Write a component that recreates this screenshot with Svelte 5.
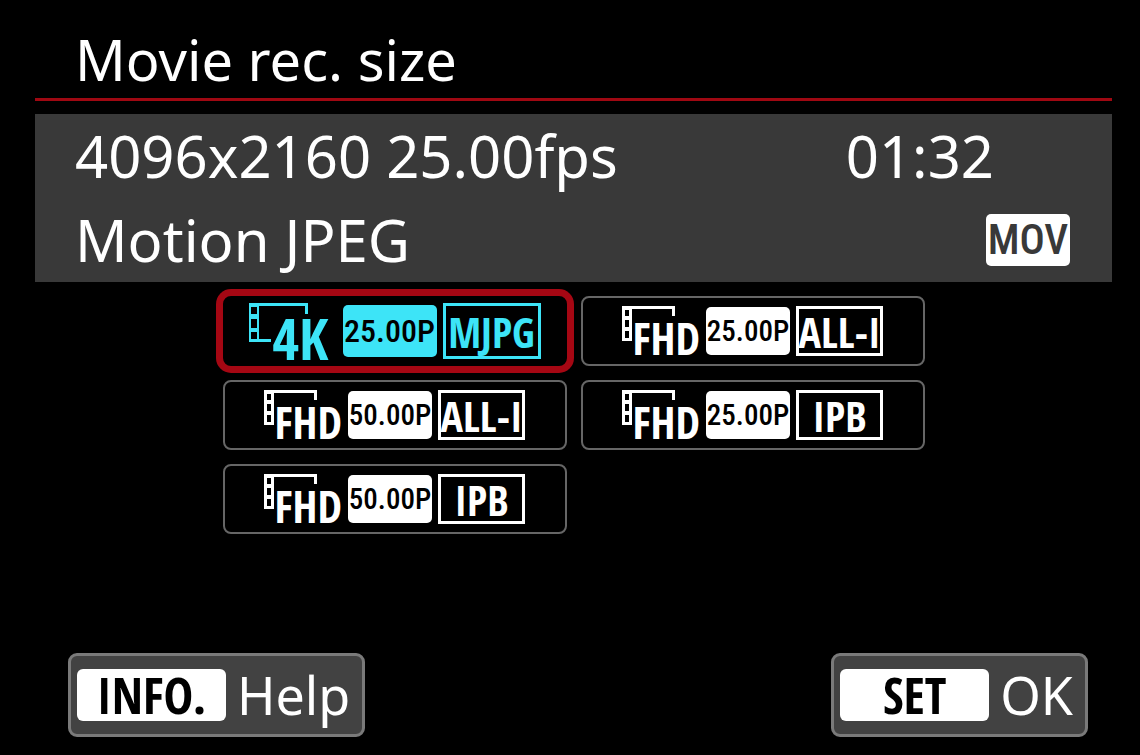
<script lang="ts">
	interface RecSize {
		size: '4K' | 'FHD';
		fps: string;
		codec: string;
		resolution: string;
		format: string;
		time: string;
	}

	const SIZES: RecSize[] = [
		{ size: '4K', fps: '25.00P', codec: 'MJPG', resolution: '4096x2160 25.00fps', format: 'Motion JPEG', time: '01:32' },
		{ size: 'FHD', fps: '25.00P', codec: 'ALL-I', resolution: '4096x2160 25.00fps', format: 'Motion JPEG', time: '01:32' },
		{ size: 'FHD', fps: '50.00P', codec: 'ALL-I', resolution: '4096x2160 25.00fps', format: 'Motion JPEG', time: '01:32' },
		{ size: 'FHD', fps: '25.00P', codec: 'IPB', resolution: '4096x2160 25.00fps', format: 'Motion JPEG', time: '01:32' },
		{ size: 'FHD', fps: '50.00P', codec: 'IPB', resolution: '4096x2160 25.00fps', format: 'Motion JPEG', time: '01:32' }
	];

	let selected = $state(0);
	let current = $derived(SIZES[selected]);
</script>

<main class="screen">
	<h1 class="title">Movie rec. size</h1>

	<section class="info">
		<div class="info-row">
			<span>{current.resolution}</span>
			<span class="time">{current.time}</span>
		</div>
		<div class="info-row">
			<span>{current.format}</span>
			<span class="container-tag">MOV</span>
		</div>
	</section>

	<div class="options">
		{#each SIZES as option, i (i)}
			<button
				type="button"
				class="option"
				class:selected={i === selected}
				aria-pressed={i === selected}
				onclick={() => (selected = i)}
			>
				<span class="film" class:uhd={option.size === '4K'}>
					{#if option.size === '4K'}
						<svg width="80" height="56" viewBox="0 0 80 56" aria-hidden="true">
							<path
								fill-rule="evenodd"
								d="M0 0H59V11H56V3H10V36H22V39H0ZM2 4V11H8V4ZM2 16V25H8V16ZM2 29V36H8V29Z"
							/>
						</svg>
					{:else}
						<svg width="78" height="50" viewBox="0 0 78 50" aria-hidden="true">
							<path
								fill-rule="evenodd"
								d="M0 0H53V10H50V3H10V35H0ZM3 4V10H7V4ZM3 14V21H7V14ZM3 25V32H7V25Z"
							/>
						</svg>
					{/if}
					<span class="film-label">{option.size}</span>
				</span>
				<span class="fps">{option.fps}</span>
				<span class="codec">{option.codec}</span>
			</button>
		{/each}
	</div>

	<footer class="footer">
		<button type="button" class="action"><span class="key">INFO.</span>Help</button>
		<button type="button" class="action"><span class="key">SET</span>OK</button>
	</footer>
</main>

<style>
	:global(body) {
		margin: 0;
		background: #000;
	}

	.screen {
		--condensed: 'Open Sans Condensed', 'Roboto Condensed', 'Liberation Sans Narrow', sans-serif;
		--narrow: 'Roboto Condensed', 'Liberation Sans Narrow', sans-serif;
		box-sizing: border-box;
		display: flex;
		flex-direction: column;
		min-height: 100vh;
		padding: 20px 28px 18px 35px;
		color: #fff;
		font-family: 'Noto Sans', 'Open Sans', sans-serif;
		line-height: 78px;
	}

	.title {
		margin: 0;
		padding-left: 40px;
		border-bottom: 3px solid #9f0812;
		font-size: 56px;
		font-weight: 400;
	}

	.info {
		margin-top: 13px;
		padding: 0 42px 0 40px;
		background: #393939;
		font-size: 58px;
	}
	.info-row {
		display: flex;
		align-items: center;
		justify-content: space-between;
		height: 84px;
	}
	.time {
		padding-right: 76px;
	}
	.container-tag {
		width: 84px;
		border-radius: 5px;
		background: #fff;
		color: #393939;
		font-family: var(--narrow);
		font-size: 42px;
		font-weight: 500;
		line-height: 52px;
		text-align: center;
	}

	.options {
		display: grid;
		grid-template-columns: repeat(2, 344px);
		gap: 14px;
		justify-content: center;
		margin-top: 14px;
	}
	.option {
		display: flex;
		align-items: center;
		justify-content: center;
		gap: 6px;
		height: 70px;
		padding: 0;
		border: 2px solid #666;
		border-radius: 8px;
		background: #000;
		color: #fff;
		font-family: var(--condensed);
		font-size: 42px;
		white-space: nowrap;
	}
	.option.selected {
		border-color: #000;
		box-shadow: 0 0 0 7px #a50713;
		color: #3de4f7;
	}

	.film {
		position: relative;
		height: 50px;
	}
	.film svg {
		display: block;
		fill: currentColor;
	}
	/* The size name sits over the open corner of the film frame. */
	.film-label {
		position: absolute;
		right: 0;
		bottom: 0;
		font-size: 44px;
		font-weight: 700;
		line-height: 36px;
	}
	.film.uhd {
		height: 56px;
		margin-right: 8px;
	}
	.uhd .film-label {
		font-size: 58px;
		line-height: 42px;
	}
	.fps,
	.codec {
		box-sizing: border-box;
		display: flex;
		align-items: center;
		justify-content: center;
	}
	.fps {
		width: 84px;
		height: 48px;
		border-radius: 5px;
		background: #fff;
		color: #000;
		font-family: var(--narrow);
		font-size: 29px;
		font-weight: 500;
	}
	.codec {
		width: 87px;
		height: 50px;
		border: 3px solid;
		font-weight: 700;
	}
	.selected .fps {
		width: 94px;
		height: 52px;
		background: #3de4f7;
		font-size: 32px;
	}
	.selected .codec {
		width: 98px;
		height: 56px;
	}

	.footer {
		display: flex;
		justify-content: space-between;
		margin-top: auto;
		padding: 0 24px 0 33px;
	}
	.action {
		display: flex;
		align-items: center;
		gap: 11px;
		height: 84px;
		padding: 0 12px 0 6px;
		border: 3px solid #7a7a7a;
		border-radius: 9px;
		background: #424242;
		color: #fff;
		font: inherit;
		font-size: 52px;
	}
	.key {
		width: 149px;
		border-radius: 6px;
		background: #fff;
		color: #000;
		font-family: var(--condensed);
		font-size: 50px;
		font-weight: 700;
		line-height: 52px;
	}
</style>
